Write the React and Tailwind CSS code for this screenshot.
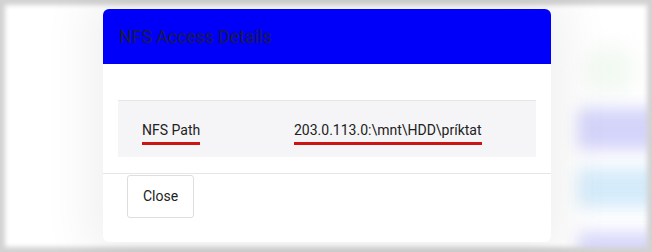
export default function App() {
  return (
    <div className="relative w-[652px] h-[252px] overflow-hidden bg-white font-['Roboto',sans-serif]">
      {/* blurred page behind the overlay */}
      <div className="absolute left-[585px] top-[45px] w-[50px] h-[50px] rounded-full bg-[#f1f8f1] blur-[12px]" />
      <div className="absolute left-[578px] top-[108px] w-[90px] h-[42px] rounded-md bg-[#d4d4fa] blur-[8px]" />
      <div className="absolute left-[578px] top-[168px] w-[90px] h-[40px] rounded-md bg-[#d5ebfa] blur-[8px]" />
      <div className="absolute left-[578px] top-[232px] w-[90px] h-[30px] rounded-md bg-[#d8d8fa] blur-[8px]" />
      <div className="absolute inset-0 shadow-[inset_0_0_5px_5px_#d2d2d2]" />

      {/* modal */}
      <div className="absolute left-[103px] top-[9px] w-[448px] h-[233px] flex flex-col rounded-md bg-white overflow-hidden shadow-[0_0_50px_16px_rgba(0,0,0,0.06)]">
        <div className="h-[55px] shrink-0 bg-[#0000fa] flex items-center px-4">
          <h2 className="text-[18px] text-[#1b1b45] tracking-[-0.2px]">NFS Access Details</h2>
        </div>
        <div className="pt-[36px] pb-[16px] px-[15px]">
          <div className="flex items-center h-[57px] bg-[#f5f5f7] border-t border-[#e6e6e6] text-[14px] text-[#222]">
            <div className="w-[152px] pl-6 pt-[7px]">
              <span className="inline-block leading-none pb-[5px] border-b-[3px] border-[#cc1414]">NFS Path</span>
            </div>
            <div className="pl-6 pt-[7px]">
              <span className="inline-block leading-none pb-[5px] border-b-[3px] border-[#cc1414]">203.0.113.0:\mnt\HDD\príktat</span>
            </div>
          </div>
        </div>
        <div className="border-t border-[#e6e6e6] pl-6 pt-px">
          <button className="w-[67px] h-[43px] border border-[#dedede] rounded-[3px] bg-white text-[14px] text-[#222]">
            Close
          </button>
        </div>
      </div>
    </div>
  )
}
